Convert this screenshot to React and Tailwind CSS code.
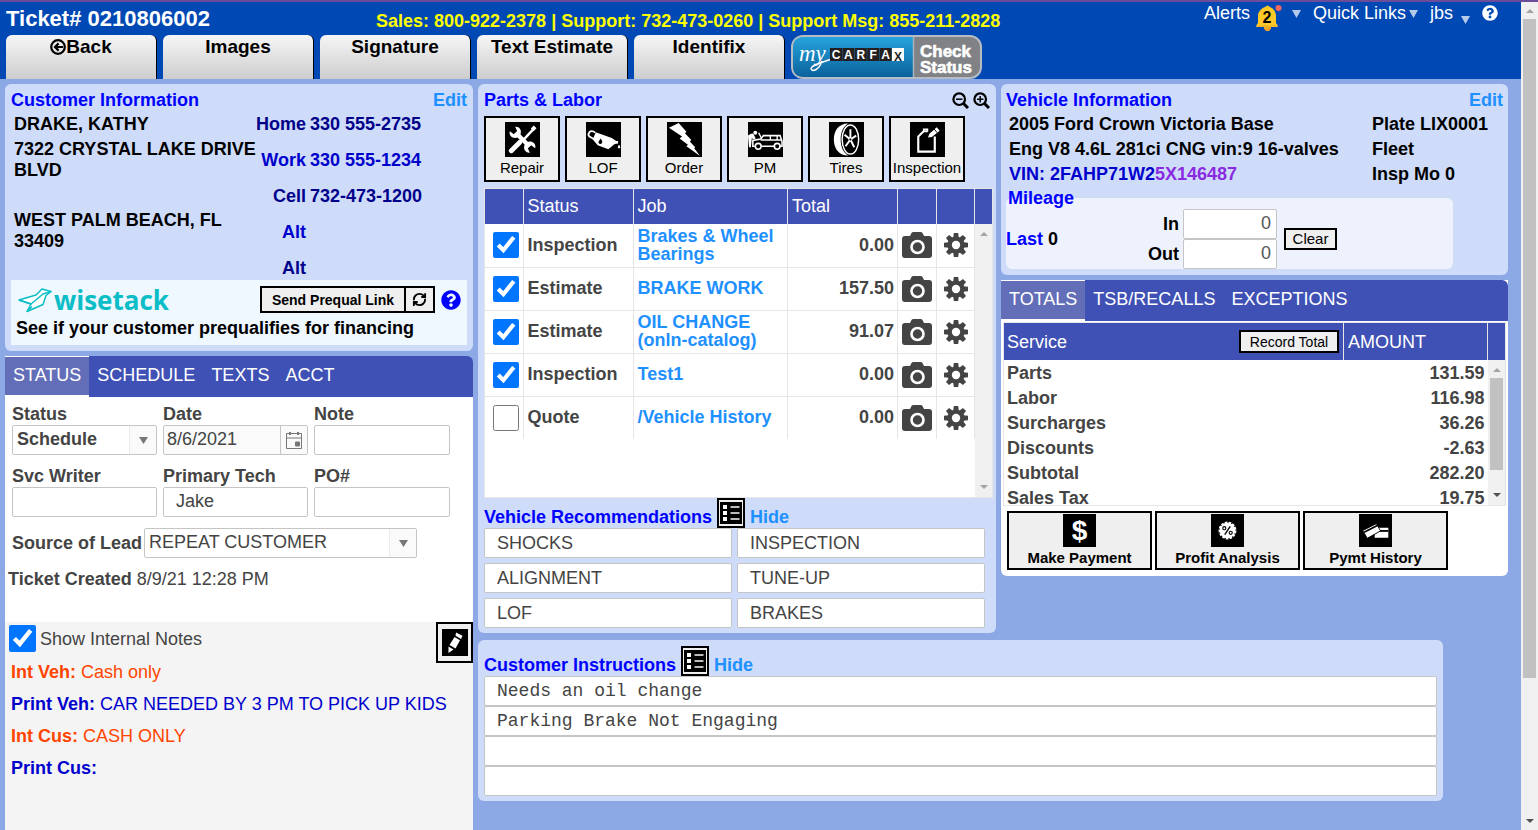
import { RefreshCw } from 'lucide-react';
import { FaQuestionCircle } from 'react-icons/fa';

const phones = [
  { label: 'Home', number: '330 555-2735', color: 'text-[#00008b]' },
  { label: 'Work', number: '330 555-1234', color: 'text-[#0000cd]' },
  { label: 'Cell', number: '732-473-1200', color: 'text-[#00008b]' },
  { label: 'Alt', number: '', color: 'text-[#0000cd]' },
  { label: 'Alt', number: '', color: 'text-[#00008b]' },
];

const jobs = [
  { status: 'Inspection', job: 'Brakes & Wheel Bearings', total: '0.00', checked: true },
  { status: 'Estimate', job: 'BRAKE WORK', total: '157.50', checked: true },
  { status: 'Estimate', job: 'OIL CHANGE (onln-catalog)', total: '91.07', checked: true },
  { status: 'Inspection', job: 'Test1', total: '0.00', checked: true },
  { status: 'Quote', job: '/Vehicle History', total: '0.00', checked: false },
];

const totals = [
  ['Parts', '131.59'],
  ['Labor', '116.98'],
  ['Surcharges', '36.26'],
  ['Discounts', '-2.63'],
  ['Subtotal', '282.20'],
  ['Sales Tax', '19.75'],
];

const recommendations = ['SHOCKS', 'INSPECTION', 'ALIGNMENT', 'TUNE-UP', 'LOF', 'BRAKES'];

const instructions = ['Needs an oil change', 'Parking Brake Not Engaging', '', ''];

const notes = [
  { label: 'Int Veh:', text: 'Cash only', color: 'text-[#ff4500]' },
  { label: 'Print Veh:', text: 'CAR NEEDED BY 3 PM TO PICK UP KIDS', color: 'text-[#0000cd]' },
  { label: 'Int Cus:', text: 'CASH ONLY', color: 'text-[#ff4500]' },
  { label: 'Print Cus:', text: '', color: 'text-[#0000cd]' },
];

const field = 'h-[30px] w-full min-w-0 rounded-xs border border-[#c5c5c5] bg-white';

/* ---------- icons ---------- */

function Caret({ className }) {
  return (
    <svg viewBox="0 0 10 8" preserveAspectRatio="none" className={className} fill="currentColor" aria-hidden="true">
      <path d="M0 0h10L5 8z" />
    </svg>
  );
}

function BackIcon() {
  return (
    <svg viewBox="0 0 16 16" className="size-4" fill="none" stroke="currentColor" aria-hidden="true">
      <circle cx="8" cy="8" r="6.8" strokeWidth="2.2" />
      <path d="M13 8H5M8.6 4.4L5 8l3.600 3.600" strokeWidth="2.2" />
    </svg>
  );
}

function BellIcon() {
  return (
    <svg viewBox="0 0 26 27" className="h-[27px] w-[26px]" aria-hidden="true">
      <path d="M8 23h7v1.500l-2 2.500h-3l-2-2.500z" fill="#f5a623" />
      <path d="M10 2.500q1.500-2 3 0c4.500 1.500 7 5 7 9.500v7l1.500 2V23H0.500v-2l1.500-2v-7c0-4.500 3.500-8 8-9.500z" fill="#ffca28" />
      <path d="M0.500 21.500h21V23h-21z" fill="#f7b52c" />
      <circle cx="22.500" cy="4" r="3" fill="#f4675c" />
    </svg>
  );
}

function ZoomIcon({ plus }) {
  return (
    <svg viewBox="0 0 17 17" className="size-[17px]" fill="none" stroke="#000" aria-hidden="true">
      <circle cx="7.200" cy="7.200" r="5.800" strokeWidth="2.200" />
      <path d="M11.500 11.500l4.500 4.500" strokeWidth="3" />
      <path d={plus ? 'M4 7.200h6.400M7.200 4v6.400' : 'M4 7.200h6.400'} strokeWidth="1.500" />
    </svg>
  );
}

function CameraIcon() {
  return (
    <svg viewBox="0 0 30 26" className="h-[26px] w-[30px]" aria-hidden="true">
      <path
        d="M3 4h5l1.500-3Q10 0 11.500 0h7Q20 0 20.500 1L22 4h5q3 0 3 3v16q0 3-3 3H3q-3 0-3-3V7q0-3 3-3z"
        fill="#444"
      />
      <circle cx="15.500" cy="15" r="6" fill="#444" stroke="#fff" strokeWidth="2.600" />
    </svg>
  );
}

function GearIcon() {
  return (
    <svg viewBox="0 0 24 24" className="size-6" fill="#444" aria-hidden="true">
      {[0, 45, 90, 135].map((a) => (
        <path key={a} d="M9.800 0h4.400l.6 5v14l-.6 5H9.800l-.6-5V5z" transform={`rotate(${a} 12 12)`} />
      ))}
      <circle cx="12" cy="12" r="8.600" />
      <circle cx="12" cy="12" r="4.200" fill="#fff" />
    </svg>
  );
}

function CalendarIcon() {
  return (
    <svg viewBox="0 0 16 17" className="h-[17px] w-4" fill="none" stroke="#777" aria-hidden="true">
      <path d="M.5 1.500h15v15H.5zM.5 6h15" />
      <path d="M4 0v3M12 0v3" strokeWidth="2" />
      <path d="M9.500 10h4v4h-4z" fill="#777" />
    </svg>
  );
}

function Tile({ className, children }) {
  return (
    <svg viewBox="0 0 36 36" className={`${className} bg-black`} fill="none" stroke="#fff" aria-hidden="true">
      {children}
    </svg>
  );
}

function RepairArt() {
  return (
    <>
      <path d="M11 11l14 14" strokeWidth="4.500" />
      <path d="M5 9.500l4 3 3.500-3L10.500 5c4-.5 7 3 5.500 7.500-1.500 3.500-5 4.500-8 3.500-2.500-1-4-4-3-6.500z" fill="#fff" stroke="none" />
      <path d="M31 27l-4-3-3.500 3 2 4.500c-4 .5-7-3-5.500-7.500 1.500-3.500 5-4.500 8-3.500 2.500 1 4 4 3 6.500z" fill="#fff" stroke="none" />
      <path d="M31 5.500L17.500 20" strokeWidth="2.500" />
      <path d="M15 21L6.500 29.500" strokeWidth="5" strokeLinecap="round" />
      <path d="M28 8l3-3" strokeWidth="4" />
    </>
  );
}

function OilArt() {
  return (
    <>
      <path d="M10 10.500L26.500 16.500l4.500 3h2v2.500l-3.500.5-6.500 5.500-11-4L7 18z" fill="#fff" stroke="none" />
      <path d="M8 17.500L3.500 15q-2-2 0-4.500 2.500-2.500 6 .5" strokeWidth="1.800" />
      <path d="M15 17c2 2.500 2.500 4 .5 5.500-2 .5-3-1-2.500-2.500z" fill="#000" stroke="none" />
      <path d="M34 24l1 2.500h-2z" fill="#fff" strokeWidth="1" />
    </>
  );
}

function BoltArt() {
  return <path d="M12 1l8 9-1.500 1.500 6.500 7-1.500 1.500 5.500 6-1 1 6 8-14-10 1.500-1.500-8.500-6.500 2.500-2L2 6z" fill="#fff" stroke="none" />;
}

function CarArt() {
  return (
    <>
      <path d="M15 14h18l2 6v5h-3M28 25H14M7 25H5v-6l8-1.500 3-3.500" strokeWidth="1.600" />
      <path d="M13 18.500h22M23 14v5M30 14v5" strokeWidth="1.400" />
      <circle cx="10.500" cy="25" r="3" strokeWidth="1.600" />
      <circle cx="30" cy="25" r="3" strokeWidth="1.600" />
      <circle cx="7.500" cy="11" r="2" fill="#fff" stroke="none" />
      <path d="M0 14q5-4 6-1l2 4-3 1-1-2-1 10H1z" fill="#fff" stroke="none" />
      <path d="M14 17l-3-6" strokeWidth="1.400" />
    </>
  );
}

function TireArt() {
  return (
    <>
      <ellipse cx="22" cy="18" rx="8.500" ry="15" strokeWidth="1.500" />
      <path d="M20 1.500C9 1.500 5 10 5 18s4 16.500 15 16.500C15 32 12 26 12 18S15 4 20 1.500z" fill="#fff" stroke="none" />
      <path d="M22 18V7.500M22 18l6-4M22 18l4 8M22 18l-5 7M22 18l-6-5" strokeWidth="2" />
      <circle cx="22" cy="18" r="1.500" fill="#000" strokeWidth="1" />
    </>
  );
}

function ClipboardArt() {
  return (
    <>
      <path d="M18 9.500h-4l-5.500 5.500v15.500h17V15" strokeWidth="2.200" />
      <path d="M14 9v-1.500h4V10" strokeWidth="1.500" />
      <path d="M18.500 16l1.500-4 7.500-6.500 3 3.500-8 6.500z" fill="#fff" stroke="none" />
      <path d="M24.500 7l3.500 4" stroke="#000" />
    </>
  );
}

function ListIcon() {
  return (
    <svg viewBox="0 0 22 22" className="size-[22px] bg-black" aria-hidden="true">
      {[3, 9, 15].map((y) => (
        <g key={y}>
          <path d={`M3 ${y}h4v4H3z`} fill="#fff" />
          <path d={`M10.500 ${y + 1}h9v2h-9z`} fill="#bbb" />
        </g>
      ))}
    </svg>
  );
}

function PencilIcon() {
  return (
    <svg viewBox="0 0 26 27" className="h-[27px] w-[26px] bg-black" fill="#fff" aria-hidden="true">
      <path d="M14 3.500l6.500 3.200-1.500 3.300-5.500-3.200zM12.500 8l5.500 3.200-4.500 8.300-6-3.500zM6.500 17.500l5 3L6.500 24z" />
    </svg>
  );
}

function WisetackLogo() {
  return (
    <div className="flex items-center text-[#0bbdc6]">
      <svg viewBox="0 0 34 26" className="ml-[2px] h-[26px] w-[34px]" fill="none" stroke="currentColor" strokeWidth="1.500" strokeLinejoin="round" aria-hidden="true">
        <path d="M1 13l17-5 6-6 9 2.500-5 4-3 9L9 24.500l4-7.500z" fill="#fff" />
        <path d="M1 13l12 4 12-10 8-2.500M9 24.500l5-5" />
      </svg>
      <span className="ml-[2px] font-['Open_Sans',sans-serif] text-[26px] leading-[26px] font-bold">wisetack</span>
    </div>
  );
}

function CarfaxBadge() {
  return (
    <svg viewBox="0 0 191 44" className="h-11 w-[191px]" role="img" aria-label="my CARFAX Check Status">
      <defs>
        <linearGradient id="blue" x1="0" y1="0" x2="0" y2="1">
          <stop offset="0" stopColor="#26a3dc" />
          <stop offset="1" stopColor="#0a629c" />
        </linearGradient>
      </defs>
      <rect x="1" y="1" width="189" height="42" rx="11" fill="#808285" stroke="#b5bcc4" strokeWidth="2" />
      <path d="M13 2h109v40H13Q2 42 2 31V13Q2 2 13 2z" fill="url(#blue)" />
      <path d="M122.500 2v40" stroke="#aab4bd" strokeWidth="1.500" />
      <text x="8" y="26" fontFamily="Liberation Serif, serif" fontStyle="italic" fontSize="23" fill="#fff">my</text>
      <path d="M31 26q-3 9-9 9.500-5-2 3-6l14-5" fill="none" stroke="#fff" strokeWidth="1.500" />
      {['C', 'A', 'R', 'F', 'A', 'X'].map((c, i) => (
        <g key={i}>
          <rect x={39 + i * 12.400} y="13" width="12" height="13" fill={i === 5 ? '#fff' : '#231f20'} />
          <text
            x={45 + i * 12.400}
            y={i === 5 ? 26 : 24}
            textAnchor="middle"
            fontFamily="Liberation Sans, sans-serif"
            fontWeight="bold"
            fontSize="12"
            fill={i === 5 ? '#231f20' : '#fff'}
          >
            {c}
          </text>
        </g>
      ))}
      <g fontFamily="Liberation Sans, sans-serif" fontWeight="bold" fontSize="17" fill="#fff" stroke="#fff" strokeWidth=".6">
        <text x="129" y="22">Check</text>
        <text x="129" y="38">Status</text>
      </g>
    </svg>
  );
}

/* ---------- shared pieces ---------- */

function Panel({ className = '', children }) {
  return <section className={`rounded-md bg-[#cedcf9] ${className}`}>{children}</section>;
}

function PanelTitle({ children }) {
  return <h2 className="font-bold text-[#0000ff]">{children}</h2>;
}

function TabBar({ tabs, label }) {
  return (
    <div role="tablist" aria-label={label} className="flex h-[41px] rounded-tr-md bg-[#3f51b5] text-white">
      {tabs.map((tab, i) => (
        <button
          key={tab}
          type="button"
          role="tab"
          aria-selected={i === 0}
          className={i === 0 ? 'border-y border-b-2 border-white bg-[#626eb8] px-2 pb-[2px]' : 'px-2 pb-[3px]'}
        >
          {tab}
        </button>
      ))}
    </div>
  );
}

function ListHeading({ title }) {
  return (
    <div className="flex h-[30px] items-end gap-[5px]">
      <PanelTitle>{title}</PanelTitle>
      <button type="button" aria-label={`${title} list`} className="grid h-[30px] w-7 place-items-center border-2 border-black bg-[#efefef]">
        <ListIcon />
      </button>
      <a href="#hide" className="font-bold text-[#1e90ff]">Hide</a>
    </div>
  );
}

function Dropdown({ id, value, className = '' }) {
  return (
    <div className="relative">
      <select id={id} className={`${field} appearance-none pr-7 pb-[2px] pl-1 ${className}`}>
        <option>{value}</option>
      </select>
      <span className="pointer-events-none absolute inset-y-px right-px grid w-[27px] place-items-center border-l border-[#ebebeb] bg-[#fafafa]">
        <Caret className="h-[7px] w-[9px] text-[#777]" />
      </span>
    </div>
  );
}

/* ---------- page sections ---------- */

const navButton =
  'flex h-11 w-[151px] items-start justify-center rounded-t-md border-r border-black bg-linear-to-b from-[#f6f6f6] to-[#cdcdcd] text-[19px] leading-[23px] font-bold text-black';

function Header() {
  return (
    <header className="bg-[#0048b3] pl-[6px]">
      <div className="flex h-[33px] items-start">
        <h1 className="w-[370px] shrink-0 text-[22px] leading-[34px] font-bold text-white">Ticket# 0210806002</h1>
        <p className="pt-2 font-bold whitespace-nowrap text-[#ffff00]">
          Sales: 800-922-2378 | Support: 732-473-0260 | Support Msg: 855-211-2828
        </p>
        <nav className="ml-auto flex items-start pr-[23px] whitespace-nowrap text-white">
          <a href="#alerts">Alerts</a>
          <span className="relative ml-[6px] mt-[2px]">
            <BellIcon />
            <span className="absolute inset-y-0 left-0 w-[22px] pt-1 text-center text-base leading-5 font-bold text-black">2</span>
          </span>
          <Caret className="mt-2 ml-[10px] h-2 w-[9px] text-[#b5c9ea]" />
          <a href="#links" className="ml-3">Quick Links</a>
          <Caret className="mt-2 ml-[3px] h-2 w-[9px] text-[#b5c9ea]" />
          <a href="#user" className="ml-3">jbs</a>
          <Caret className="mt-[14px] ml-2 h-2 w-[9px] text-[#b5c9ea]" />
          <a href="#help" aria-label="Help" className="mt-[3px] ml-3">
            <FaQuestionCircle className="size-4" />
          </a>
        </nav>
      </div>
      <div className="flex gap-[6px]">
        <button type="button" className={navButton}>
          <span className="pt-1"><BackIcon /></span>
          Back
        </button>
        {['Images', 'Signature', 'Text Estimate', 'Identifix'].map((name) => (
          <button key={name} type="button" className={navButton}>{name}</button>
        ))}
        <button type="button"><CarfaxBadge /></button>
      </div>
    </header>
  );
}

function CustomerInfo() {
  return (
    <Panel className="px-[6px] pt-[5px] pb-[6px]">
      <div className="flex justify-between">
        <PanelTitle>Customer Information</PanelTitle>
        <a href="#edit-customer" className="font-bold text-[#1e90ff]">Edit</a>
      </div>
      <div className="flex pt-[2px] pb-px pl-[3px] font-bold">
        <address className="w-[242px] shrink-0 pt-px leading-[21px] text-black not-italic">
          <p>DRAKE, KATHY</p>
          <p className="mt-1">7322 CRYSTAL LAKE DRIVE BLVD</p>
          <p className="mt-[29px]">WEST PALM BEACH, FL 33409</p>
        </address>
        <dl className="flex flex-col gap-[14px]">
          {phones.map((p, i) => (
            <div key={i} className={`flex gap-1 ${p.color}`}>
              <dt className="w-[50px] text-right">{p.label}</dt>
              <dd>{p.number}</dd>
            </div>
          ))}
        </dl>
      </div>
      <div className="bg-[#eff7ff] py-[6px] pl-[5px] pr-[6px]">
        <div className="flex items-center">
          <WisetackLogo />
          <div className="ml-auto flex text-[14px] font-bold text-black">
            <button type="button" className="h-[27px] w-[146px] border-2 border-black bg-[#efefef]">Send Prequal Link</button>
            <button type="button" aria-label="Refresh" className="grid h-[27px] w-[29px] place-items-center border-2 border-l-0 border-black bg-[#efefef]">
              <RefreshCw className="size-[15px]" strokeWidth={3} />
            </button>
          </div>
          <a href="#wisetack-help" aria-label="Financing help" className="ml-[6px] text-[#0000ff]">
            <FaQuestionCircle className="size-5" />
          </a>
        </div>
        <p className="mt-1 font-bold text-black">See if your customer prequalifies for financing</p>
      </div>
    </Panel>
  );
}

function StatusPanel() {
  return (
    <section className="flex flex-1 flex-col text-[#444]">
      <TabBar label="Ticket" tabs={['STATUS', 'SCHEDULE', 'TEXTS', 'ACCT']} />
      <div className="bg-white pt-[6px] pb-8 pl-[7px] pr-[23px]">
        <div className="grid grid-cols-[145fr_145fr_136fr] gap-x-[6px] gap-y-[10px]">
          <div>
            <label htmlFor="status" className="block font-bold">Status</label>
            <Dropdown id="status" value="Schedule" className="font-bold" />
          </div>
          <div>
            <label htmlFor="date" className="block font-bold">Date</label>
            <div className={`${field} flex`}>
              <input id="date" defaultValue="8/6/2021" className="w-0 flex-1 bg-[#fafafa] pb-[2px] pl-[3px]" />
              <button type="button" aria-label="Pick a date" className="grid w-[27px] place-items-center border-l border-[#c5c5c5] bg-[#fafafa]">
                <CalendarIcon />
              </button>
            </div>
          </div>
          <div>
            <label htmlFor="note" className="block font-bold">Note</label>
            <input id="note" className={`${field} px-3`} />
          </div>
          <div>
            <label htmlFor="writer" className="block font-bold">Svc Writer</label>
            <input id="writer" className={`${field} px-3`} />
          </div>
          <div>
            <label htmlFor="tech" className="block font-bold">Primary Tech</label>
            <input id="tech" defaultValue="Jake" className={`${field} px-3 pb-[2px]`} />
          </div>
          <div>
            <label htmlFor="po" className="block font-bold">PO#</label>
            <input id="po" className={`${field} px-3`} />
          </div>
        </div>
        <div className="mt-[11px] flex items-center">
          <label htmlFor="lead" className="w-[132px] shrink-0 font-bold whitespace-nowrap">Source of Lead</label>
          <div className="w-[273px]">
            <Dropdown id="lead" value="REPEAT CUSTOMER" />
          </div>
        </div>
        <p className="-ml-1 mt-[10px]"><b>Ticket Created</b> 8/9/21 12:28 PM</p>
      </div>
      <div className="flex-1 bg-[#f4f4f4] pl-1">
        <div className="flex h-[34px] items-start justify-between">
          <label className="flex items-center gap-1 pt-[3px]">
            <input type="checkbox" defaultChecked className="size-[27px] accent-[#0075ff]" />
            Show Internal Notes
          </label>
          <button type="button" aria-label="Edit notes" className="grid h-[41px] w-[37px] shrink-0 place-items-center border-2 border-black bg-[#efefef]">
            <PencilIcon />
          </button>
        </div>
        <div className="pl-[2px] leading-8">
          {notes.map((n) => (
            <p key={n.label} className={n.color}><b>{n.label}</b> {n.text}</p>
          ))}
        </div>
      </div>
    </section>
  );
}

const tools = [
  { name: 'Repair', Art: RepairArt },
  { name: 'LOF', Art: OilArt },
  { name: 'Order', Art: BoltArt },
  { name: 'PM', Art: CarArt },
  { name: 'Tires', Art: TireArt },
  { name: 'Inspection', Art: ClipboardArt },
];

function JobsTable() {
  return (
    <div className="flex min-h-[310px] border border-[#e6e6e6] bg-white text-[#444]">
      <div className="flex-1">
        <table className="w-full table-fixed border-collapse">
          <colgroup>
            <col className="w-[38px]" />
            <col className="w-[110px]" />
            <col />
            <col className="w-[110px]" />
            <col className="w-[39px]" />
            <col className="w-[38px]" />
          </colgroup>
          <thead>
            <tr className="h-[35px] bg-[#3f51b5] text-left text-white *:border-r *:border-[#e6e6e6] *:pb-[2px] *:pl-1 *:font-normal">
              <th aria-label="Selected" />
              <th>Status</th>
              <th>Job</th>
              <th>Total</th>
              <th aria-label="Photos" />
              <th aria-label="Settings" />
            </tr>
          </thead>
          <tbody>
            {jobs.map((j) => (
              <tr key={j.job} className="h-[43px] font-bold *:border-r *:border-[#e6e6e6] not-last:*:border-b">
                <td className="pl-2">
                  <input type="checkbox" aria-label={j.job} defaultChecked={j.checked} className="block size-[26px] accent-[#0075ff]" />
                </td>
                <td className="pb-px pl-1">{j.status}</td>
                <td className="pb-px pl-1 leading-[18px]">
                  <a href="#job" className="text-[#1e90ff]">{j.job}</a>
                </td>
                <td className="pr-[3px] pb-px text-right">{j.total}</td>
                <td>
                  <button type="button" aria-label="Photos" className="mx-auto block"><CameraIcon /></button>
                </td>
                <td>
                  <button type="button" aria-label="Settings" className="mx-auto block"><GearIcon /></button>
                </td>
              </tr>
            ))}
          </tbody>
        </table>
      </div>
      <div className="flex w-[17px] flex-col">
        <div className="h-[35px] bg-[#3f51b5]" />
        <div className="flex flex-1 flex-col items-center justify-between bg-[#f0f0f0] py-2 text-[#a3a3a3]">
          <Caret className="h-1 w-2 rotate-180" />
          <Caret className="h-1 w-2" />
        </div>
      </div>
    </div>
  );
}

function PartsLabor() {
  return (
    <Panel className="px-[6px] py-[5px]">
      <div className="flex items-center justify-between">
        <PanelTitle>Parts &amp; Labor</PanelTitle>
        <div className="flex gap-1">
          <button type="button" aria-label="Zoom out"><ZoomIcon /></button>
          <button type="button" aria-label="Zoom in"><ZoomIcon plus /></button>
        </div>
      </div>
      <div className="flex gap-[5px] pt-[5px] pb-[6px]">
        {tools.map(({ name, Art }) => (
          <button key={name} type="button" className="flex h-[66px] w-[76px] flex-col items-center border-2 border-black bg-[#efefef] pt-1 text-[15px] leading-[22px] text-black">
            <Tile className="size-[35px]"><Art /></Tile>
            {name}
          </button>
        ))}
      </div>
      <div className="-mr-[3px]">
        <JobsTable />
      </div>
      <ListHeading title="Vehicle Recommendations" />
      <div className="grid grid-cols-2 gap-[5px] pr-[5px]">
        {recommendations.map((r) => (
          <input key={r} aria-label="Vehicle recommendation" defaultValue={r} className={`${field} px-3 text-[#444]`} />
        ))}
      </div>
    </Panel>
  );
}

function VehicleInfo() {
  return (
    <Panel className="px-[5px] pt-[5px] pb-[6px]">
      <div className="flex justify-between">
        <PanelTitle>Vehicle Information</PanelTitle>
        <a href="#edit-vehicle" className="font-bold text-[#1e90ff]">Edit</a>
      </div>
      <div className="flex justify-between pt-px pl-[3px] leading-[25px] font-bold text-black">
        <div>
          <p>2005 Ford Crown Victoria Base</p>
          <p>Eng V8 4.6L 281ci CNG vin:9 16-valves</p>
          <p className="text-[#0000cd]">VIN: 2FAHP71W2<span className="text-[#8a2be2]">5X146487</span></p>
        </div>
        <div className="w-[131px] whitespace-nowrap">
          <p>Plate LIX0001</p>
          <p>Fleet</p>
          <p>Insp Mo 0</p>
        </div>
      </div>
      <fieldset className="mr-[50px] rounded-md bg-[#edf2fd] font-bold text-black">
        <legend className="pl-[2px] text-[#0000ff]">Mileage</legend>
        <div className="flex items-center">
          <p className="w-[120px]"><span className="text-[#0000ff]">Last</span> 0</p>
          <div>
            <div className="flex items-center gap-1">
              <label htmlFor="in" className="w-[53px] text-right">In</label>
              <input id="in" defaultValue="0" className="h-[30px] w-[94px] rounded-xs border border-[#c5c5c5] bg-white px-[5px] pb-[2px] text-right font-normal text-[#555]" />
            </div>
            <div className="flex items-center gap-1">
              <label htmlFor="out" className="w-[53px] text-right">Out</label>
              <input id="out" defaultValue="0" className="h-[30px] w-[94px] rounded-xs border border-[#c5c5c5] bg-white px-[5px] pb-[2px] text-right font-normal text-[#555]" />
            </div>
          </div>
          <button type="button" className="ml-[7px] h-[22px] w-[53px] border-2 border-black bg-[#efefef] text-[15px] leading-[18px] font-normal">Clear</button>
        </div>
      </fieldset>
    </Panel>
  );
}

const payButton =
  'flex h-[59px] w-[145px] flex-col items-center border-2 border-black bg-[#efefef] pt-px text-[15px] leading-[22px] font-bold text-black';

function TotalsPanel() {
  return (
    <section className="rounded-b-md bg-white pb-[6px]">
      <TabBar label="Totals" tabs={['TOTALS', 'TSB/RECALLS', 'EXCEPTIONS']} />
      <div className="mx-[2px] mt-px flex h-[184px] overflow-hidden border border-[#e6e6e6]">
        <div className="flex-1">
          <table className="w-full border-collapse">
            <thead>
              <tr className="h-[37px] bg-[#3f51b5] text-left text-white">
                <th className="border-r border-[#e6e6e6] pl-[3px] pr-1 font-normal">
                  <div className="flex items-center justify-between">
                    Service
                    <button type="button" className="h-[23px] w-[100px] border-2 border-black bg-[#efefef] text-[14px] leading-[18px] text-black">Record Total</button>
                  </div>
                </th>
                <th className="w-[144px] border-r border-[#e6e6e6] pl-1 font-normal">AMOUNT</th>
              </tr>
            </thead>
            <tbody className="font-bold text-[#444]">
              {totals.map(([name, amount]) => (
                <tr key={name} className="h-[25px] leading-6">
                  <td className="pl-[3px]">{name}</td>
                  <td className="pr-[3px] text-right">{amount}</td>
                </tr>
              ))}
            </tbody>
          </table>
        </div>
        <div className="flex w-[17px] flex-col">
          <div className="h-[37px] bg-[#3f51b5]" />
          <div className="flex flex-1 flex-col items-center bg-[#f0f0f0] py-2">
            <Caret className="h-1 w-2 rotate-180 text-[#a3a3a3]" />
            <div className="mt-[6px] mb-auto h-[92px] w-[13px] bg-[#c1c1c1]" />
            <Caret className="h-1 w-2 text-[#505050]" />
          </div>
        </div>
      </div>
      <div className="flex gap-[3px] pt-[5px] pl-[6px]">
        <button type="button" className={payButton}>
          <span className="grid size-[33px] shrink-0 place-items-center bg-black text-[28px] leading-[33px] text-white" aria-hidden="true">$</span>
          Make Payment
        </button>
        <button type="button" className={payButton}>
          <Tile className="size-[33px] shrink-0">
            <circle cx="18" cy="18" r="8.500" fill="#fff" strokeWidth="2.500" strokeDasharray="2.800 1.300" />
            <path d="M21 13.500l-6 9" stroke="#000" strokeWidth="1.500" />
            <circle cx="14.500" cy="15.500" r="1.700" stroke="#000" strokeWidth="1.200" />
            <circle cx="21.500" cy="20.500" r="1.700" stroke="#000" strokeWidth="1.200" />
          </Tile>
          Profit Analysis
        </button>
        <button type="button" className={payButton}>
          <Tile className="size-[33px] shrink-0">
            <path d="M18 15h14v11H17z" fill="#fff" stroke="none" />
            <path d="M20 18.500h12" stroke="#000" strokeWidth="2" />
            <path d="M4 18l15-7.500 4.500 8L9 26.500z" fill="#fff" stroke="#000" />
            <path d="M5.500 20L20 12.500" stroke="#000" strokeWidth="1.800" />
          </Tile>
          Pymt History
        </button>
      </div>
    </section>
  );
}

function CustomerInstructions() {
  return (
    <Panel className="mr-[65px] px-[6px] pt-[6px] pb-[5px]">
      <ListHeading title="Customer Instructions" />
      {instructions.map((text, i) => (
        <input
          key={i}
          aria-label={`Instruction ${i + 1}`}
          defaultValue={text}
          className={`${field} block px-3 font-['Liberation_Mono',monospace] text-[#444]`}
        />
      ))}
    </Panel>
  );
}

function PageScrollbar() {
  return (
    <div className="flex w-[17px] shrink-0 flex-col items-center bg-[#f0f0f0] pt-[7px] pb-[7px]" aria-hidden="true">
      <Caret className="h-1 w-2 rotate-180 text-[#a3a3a3]" />
      <div className="mt-[6px] mb-auto h-[81%] w-[13px] bg-[#c1c1c1]" />
      <Caret className="h-1 w-2 text-[#505050]" />
    </div>
  );
}

export default function App() {
  return (
    <div className="flex min-h-screen border-t-2 border-[#6b4c9a] bg-[#8ca9e6] font-['Liberation_Sans',Arial,sans-serif] text-[18px] leading-[22px]">
      <div className="flex min-w-0 flex-1 flex-col">
        <Header />
        <main className="flex flex-1 gap-[5px] pt-[5px] pr-[13px] pl-[5px]">
          <div className="flex min-w-0 flex-[468] flex-col gap-[5px]">
            <CustomerInfo />
            <StatusPanel />
          </div>
          <div className="flex min-w-0 flex-[1030] flex-col gap-[7px]">
            <div className="flex items-start gap-[5px]">
              <div className="min-w-0 flex-[518]">
                <PartsLabor />
              </div>
              <div className="flex min-w-0 flex-[507] flex-col gap-[5px]">
                <VehicleInfo />
                <TotalsPanel />
              </div>
            </div>
            <CustomerInstructions />
          </div>
        </main>
      </div>
      <PageScrollbar />
    </div>
  );
}
